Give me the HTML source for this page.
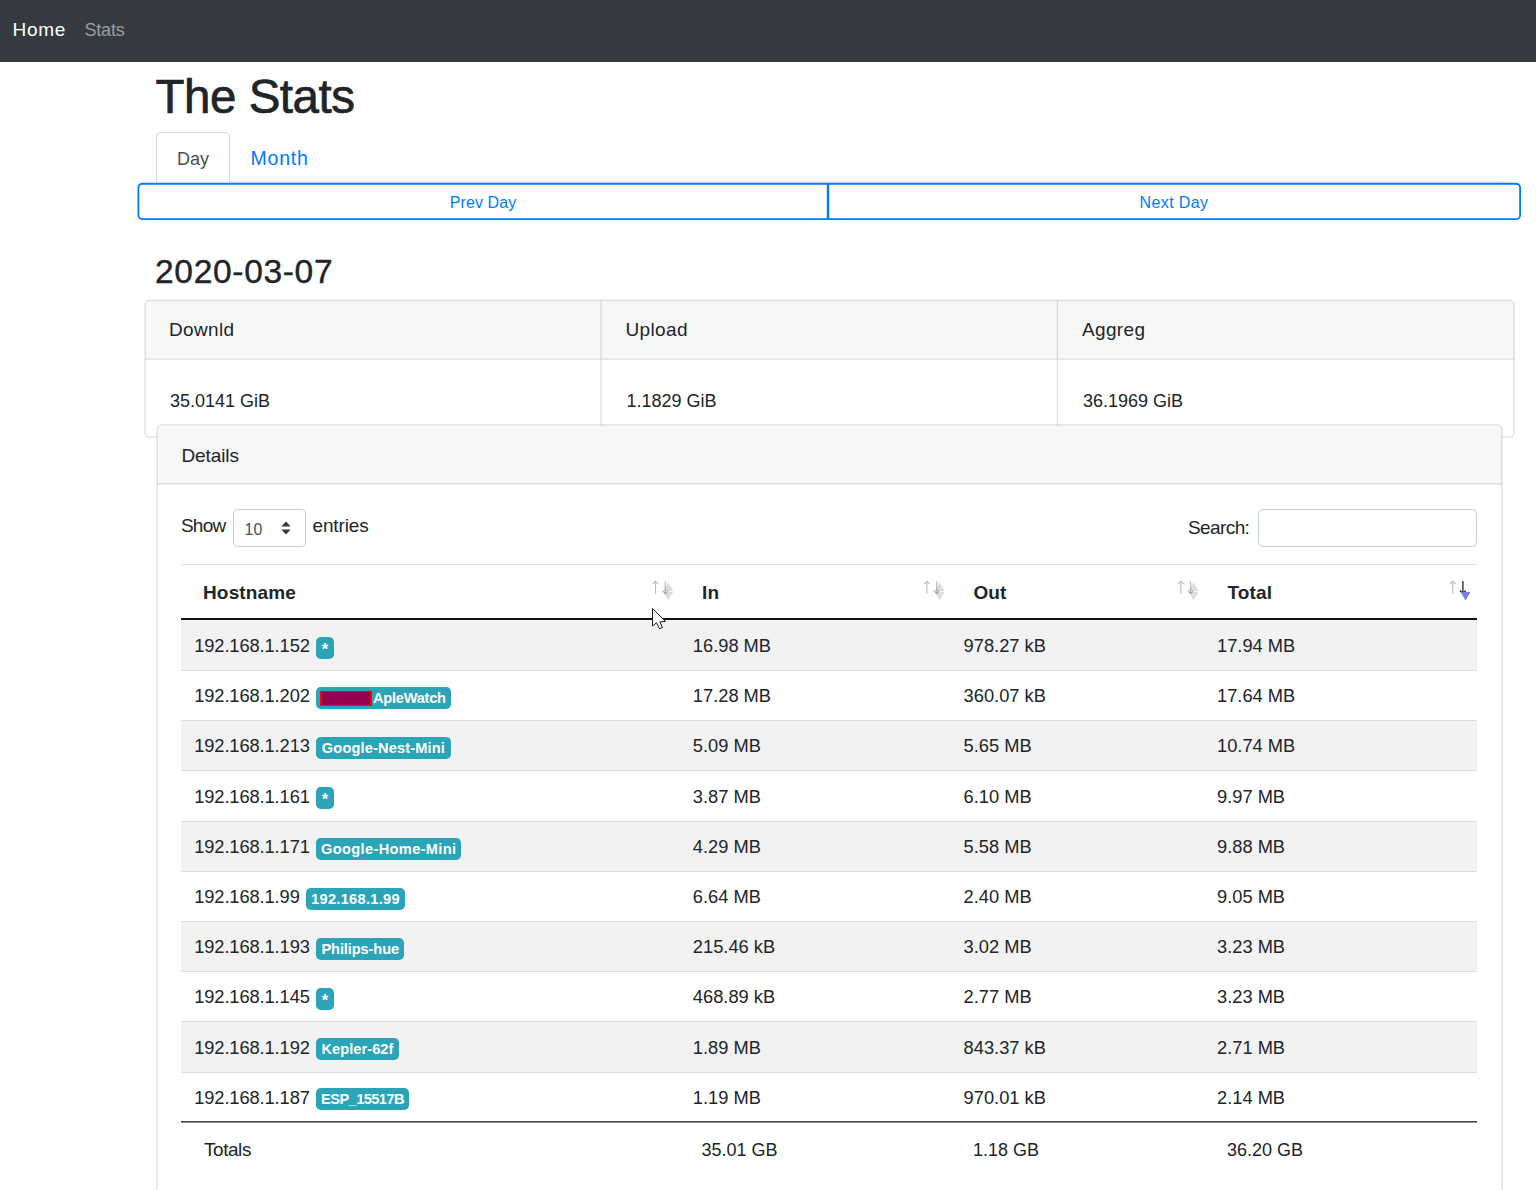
<!DOCTYPE html>
<html lang="en">
<head>
<meta charset="utf-8">
<title>The Stats</title>
<style>
*{box-sizing:border-box;margin:0;padding:0}
html,body{width:1536px;height:1190px;overflow:hidden;background:#fff}
body{font-family:"Liberation Sans",sans-serif;font-size:18px;line-height:28.8px;color:#212529;position:relative}
a{text-decoration:none;color:#007bff}
.abs{position:absolute;white-space:nowrap}
/* navbar */
.navbar{position:absolute;left:0;top:0;width:1536px;height:62px;background:#343a40}
.navbar a{position:absolute;top:16px;line-height:28.8px;font-size:18px;letter-spacing:-0.2px}
.navbar .home{left:12.5px;color:#fff;font-size:19px;letter-spacing:.75px}
.navbar .stats{left:84.5px;color:rgba(255,255,255,.5)}
h1{position:absolute;left:155.6px;top:68.2px;font-size:47.5px;line-height:57.6px;font-weight:400;letter-spacing:-.5px;white-space:nowrap;-webkit-text-stroke:0.7px #212529}
/* tabs */
.tabs{position:absolute;left:156px;top:132px;width:1346px;height:51px}
.tab{position:absolute;top:0;height:51px;line-height:28.8px;padding:11.6px 19.2px 0;font-size:18px}
.tab.active{left:0;width:74px;border:1px solid #d5dade;border-bottom-color:#fff;border-radius:5px 5px 0 0;color:#495057;background:#fff;padding-left:20px}
.tab.month{left:76px;color:#007bff;padding-left:18.5px;font-size:19.5px;letter-spacing:.8px}
/* buttons */
.btn{position:absolute;top:182.8px;height:37.4px;border:0 solid #007bff;color:#007bff;font-size:16px;line-height:25px;text-align:center;padding-top:7.2px;background:transparent;letter-spacing:.08px}
.btn.prev{left:137.3px;width:691.5px;border-radius:4.5px 0 0 4.5px}
.btn.next{left:827px;width:694px;border-radius:0 4.5px 4.5px 0;letter-spacing:.4px}
h3{position:absolute;left:155px;top:251.5px;font-size:33.6px;line-height:40px;font-weight:400;letter-spacing:.65px;white-space:nowrap;-webkit-text-stroke:0.4px #212529}
/* card group */
.cg{position:absolute;left:144.5px;top:299.5px;width:1370px;height:138px;border:1px solid transparent;overflow:hidden}
.cg .col{position:absolute;top:0;height:136px;border-left:1px solid transparent}
.cg .col:first-child{border-left:0}
.cg .hd{height:59.5px;border-bottom:1.2px solid transparent;padding:15.5px 0 0 23.5px;font-size:19px;letter-spacing:.35px}
.cg .bd{padding:26.5px 0 0 24.5px}
/* details card */
.dc{position:absolute;left:156.5px;top:424.5px;width:1346px;height:800px;border:1px solid transparent}
.dc .hd{height:59px;border-bottom:1.2px solid transparent;padding:16.5px 0 0 24px;border-radius:4px 4px 0 0;font-size:19px;letter-spacing:-.1px}
.sel{position:absolute;left:233px;top:509px;width:73px;height:37.5px;border:1px solid #c8ced5;border-radius:4.5px;background:#fff;font-size:15.8px;line-height:25px;padding:6.5px 0 0 10.6px;color:#495057}
.inp{position:absolute;left:1258px;top:509px;width:219px;height:37.5px;border:1px solid #c8ced5;border-radius:4.5px;background:#fff}
/* table */
table{position:absolute;left:181px;top:564px;width:1296px;border-collapse:separate;border-spacing:0;table-layout:fixed}
th,td{text-align:left;white-space:nowrap;overflow:hidden}
thead th{height:56px;border-top:1px solid #d9dee3;border-bottom:2px solid #111;padding:13.5px 0 0 22px;font-weight:700;vertical-align:top;position:relative;font-size:19px;letter-spacing:.15px}
tbody td{height:50.19px;border-top:1px solid #d9dee3;padding:11.3px 0 0 12.8px;vertical-align:top;font-size:18.3px}
tbody td:first-child{letter-spacing:-.1px;padding-left:13.2px}
tbody tr:first-child td{border-top:0;height:50px;padding-top:12.2px}
tbody tr:nth-child(odd) td{background:#f2f2f2}
tfoot td{border-top:1px solid transparent;padding:13.5px 0 0 21.5px;height:50px;vertical-align:top}
tfoot td:first-child{font-size:19px;letter-spacing:-.45px;padding-left:23px}
.b{display:inline-block;background:#2ba4b8;color:#fff;font-weight:700;font-size:14.6px;line-height:22px;height:22px;padding:0;text-align:center;border-radius:4.8px;vertical-align:-.7px;margin-left:1.3px;letter-spacing:.15px;text-indent:.15px}
.st{position:relative;top:2px;font-size:16.5px;line-height:1}
.red{display:inline-block;width:52px;height:15.4px;background:#99004d;border:2px solid #f00;border-top-width:1.5px;border-bottom-width:1.5px;vertical-align:-3px;margin:0 .6px 0 4.4px}
.ar{position:absolute;font-size:18px;line-height:20px;font-weight:400;top:9.5px;color:#212529;opacity:.3}
tbody td:nth-child(4){padding-left:11.6px}
tbody td:nth-child(3){padding-left:12.2px}
</style>
</head>
<body>
<div class="navbar"><a class="home">Home</a><a class="stats">Stats</a></div>
<h1>The Stats</h1>
<div class="tabs"><a class="tab active">Day</a><a class="tab month">Month</a></div>
<svg class="abs" style="left:130px;top:176px" width="1400" height="52" viewBox="130 176 1400 52"><line x1="229" y1="181.95" x2="1502.9" y2="181.95" stroke="#dee2e6" stroke-width="1.3"/><rect x="138.4" y="183.75" width="1381.7" height="35.3" rx="3.8" fill="#fff" stroke="#007bff" stroke-width="1.8"/><line x1="828" y1="183.75" x2="828" y2="219.05" stroke="#007bff" stroke-width="2.4"/></svg>
<a class="btn prev">Prev Day</a><a class="btn next">Next Day</a>
<h3>2020-03-07</h3>
<svg class="abs" style="left:0;top:290px" width="1536" height="900" viewBox="0 290 1536 900">
<defs><clipPath id="c1"><rect x="145.05" y="300.35" width="1369" height="136.7" rx="4.5"/></clipPath><clipPath id="c2"><rect x="157.15" y="424.9" width="1344.8" height="800" rx="4.5"/></clipPath></defs>
<rect x="145.05" y="300.35" width="1369" height="136.7" rx="4.5" fill="#fff"/>
<rect x="145.05" y="300.35" width="1369" height="58.65" fill="#000" fill-opacity=".03" clip-path="url(#c1)"/>
<g stroke="#000" stroke-opacity=".13" stroke-width="1.25" fill="none">
<rect x="145.05" y="300.35" width="1369" height="136.7" rx="4.5"/>
<path d="M145.05 359H1514.05M601.1 300.35V437.05M1057.45 300.35V437.05"/></g>
<rect x="157.15" y="424.9" width="1344.8" height="800" rx="4.5" fill="#fff"/>
<rect x="157.15" y="424.9" width="1344.8" height="58.95" fill="#000" fill-opacity=".03" clip-path="url(#c2)"/>
<g stroke="#000" stroke-opacity=".13" stroke-width="1.25" fill="none">
<rect x="157.15" y="424.9" width="1344.8" height="800" rx="4.5"/>
<path d="M157.15 483.85H1501.95"/></g>
</svg>
<div class="cg">
  <div class="col" style="left:0;width:455.5px"><div class="hd">Downld</div><div class="bd">35.0141 GiB</div></div>
  <div class="col" style="left:455.5px;width:456.5px"><div class="hd">Upload</div><div class="bd">1.1829 GiB</div></div>
  <div class="col" style="left:912px;width:457px"><div class="hd">Aggreg</div><div class="bd">36.1969 GiB</div></div>
</div>
<div class="dc"><div class="hd">Details</div></div>
<span class="abs" style="left:181px;top:511.5px;font-size:19px;letter-spacing:-.8px">Show</span>
<div class="sel">10</div>
<svg class="abs" style="left:280px;top:521px" width="12" height="14" viewBox="0 0 12 14"><path d="M6 0.5 L10.6 5.6 L1.4 5.6 Z M6 13.5 L10.6 8.4 L1.4 8.4 Z" fill="#343a40"/></svg>
<span class="abs" style="left:312.5px;top:511.5px;font-size:19px;letter-spacing:-.15px">entries</span>
<span class="abs" style="left:1188px;top:514px;font-size:19px;letter-spacing:-.6px">Search:</span>
<div class="inp"></div>
<table>
<colgroup><col style="width:499px"><col style="width:271.4px"><col style="width:254px"><col style="width:271.6px"></colgroup>
<thead><tr><th>Hostname</th><th>In</th><th>Out</th><th>Total</th></tr></thead>
<tbody>
<tr><td>192.168.1.152 <span class="b" style="width:18px"><span class="st">*</span></span></td><td>16.98 MB</td><td>978.27 kB</td><td>17.94 MB</td></tr>
<tr><td>192.168.1.202 <span class="b" style="width:135px;text-align:left;text-indent:0;letter-spacing:-.25px"><span class="red"></span>ApleWatch</span></td><td>17.28 MB</td><td>360.07 kB</td><td>17.64 MB</td></tr>
<tr><td>192.168.1.213 <span class="b" style="width:134.6px">Google-Nest-Mini</span></td><td>5.09 MB</td><td>5.65 MB</td><td>10.74 MB</td></tr>
<tr><td>192.168.1.161 <span class="b" style="width:18px"><span class="st">*</span></span></td><td>3.87 MB</td><td>6.10 MB</td><td>9.97 MB</td></tr>
<tr><td>192.168.1.171 <span class="b" style="width:145px;letter-spacing:0.35px;text-indent:0.35px">Google-Home-Mini</span></td><td>4.29 MB</td><td>5.58 MB</td><td>9.88 MB</td></tr>
<tr><td>192.168.1.99 <span class="b" style="width:98.6px;letter-spacing:0.3px;text-indent:0.3px">192.168.1.99</span></td><td>6.64 MB</td><td>2.40 MB</td><td>9.05 MB</td></tr>
<tr><td>192.168.1.193 <span class="b" style="width:88.4px;letter-spacing:-0.1px;text-indent:-0.1px">Philips-hue</span></td><td>215.46 kB</td><td>3.02 MB</td><td>3.23 MB</td></tr>
<tr><td>192.168.1.145 <span class="b" style="width:18px"><span class="st">*</span></span></td><td>468.89 kB</td><td>2.77 MB</td><td>3.23 MB</td></tr>
<tr><td>192.168.1.192 <span class="b" style="width:82.75px;letter-spacing:0.05px;text-indent:0.05px">Kepler-62f</span></td><td>1.89 MB</td><td>843.37 kB</td><td>2.71 MB</td></tr>
<tr><td>192.168.1.187 <span class="b" style="width:93.4px;letter-spacing:-0.55px;text-indent:-0.55px">ESP_15517B</span></td><td>1.19 MB</td><td>970.01 kB</td><td>2.14 MB</td></tr>
</tbody>
<tfoot><tr><td>Totals</td><td>35.01 GB</td><td>1.18 GB</td><td>36.20 GB</td></tr></tfoot>
</table>
<svg class="abs" style="left:0;top:0;pointer-events:none" width="1536" height="1190" viewBox="0 0 1536 1190"><g stroke="#212529" stroke-opacity=".3" stroke-width="1.15" fill="none"><path d="M655.5 593.8V581.4M652.6 584.1L655.5 581.2L658.4 584.1"/><path d="M665.25 581.2V593.3M662.35 590.5L665.25 593.5L668.15 590.5"/></g><path d="M668.2 582.3L673.2 591H663.2ZM663.2 592H673.2L668.2 600.2Z" fill="#000" fill-opacity=".13"/><g stroke="#212529" stroke-opacity=".3" stroke-width="1.15" fill="none"><path d="M926.9 593.8V581.4M924.0 584.1L926.9 581.2L929.8 584.1"/><path d="M936.65 581.2V593.3M933.75 590.5L936.65 593.5L939.55 590.5"/></g><path d="M939.6 582.3L944.6 591H934.6ZM934.6 592H944.6L939.6 600.2Z" fill="#000" fill-opacity=".13"/><g stroke="#212529" stroke-opacity=".3" stroke-width="1.15" fill="none"><path d="M1180.9 593.8V581.4M1178.0 584.1L1180.9 581.2L1183.8000000000002 584.1"/><path d="M1190.65 581.2V593.3M1187.75 590.5L1190.65 593.5L1193.5500000000002 590.5"/></g><path d="M1193.6000000000001 582.3L1198.6000000000001 591H1188.6000000000001ZM1188.6000000000001 592H1198.6000000000001L1193.6000000000001 600.2Z" fill="#000" fill-opacity=".13"/><g stroke="#212529" stroke-width="1.15" fill="none"><path stroke-opacity=".3" d="M1452.7 593.8V581.4M1449.8 584.1L1452.7 581.2L1455.6000000000001 584.1"/><path stroke-width="1.3" d="M1462.9 581V593.3M1460.0 590.5L1462.9 593.5L1465.8000000000002 590.5"/></g><path d="M1460.6 591.9H1470.4L1465.5 600.5Z" fill="#7a7fdc"/><line x1="181" y1="1121.85" x2="1477" y2="1121.85" stroke="#111" stroke-width="1.35"/><path d="M652.5 608.4V626L656.5 622.8L659.6 628.8L662.5 627.4L659.8 621.9L665.5 621.5Z" fill="#fff" stroke="#1b1e22" stroke-width="1" stroke-linejoin="round"/></svg>
</body>
</html>
